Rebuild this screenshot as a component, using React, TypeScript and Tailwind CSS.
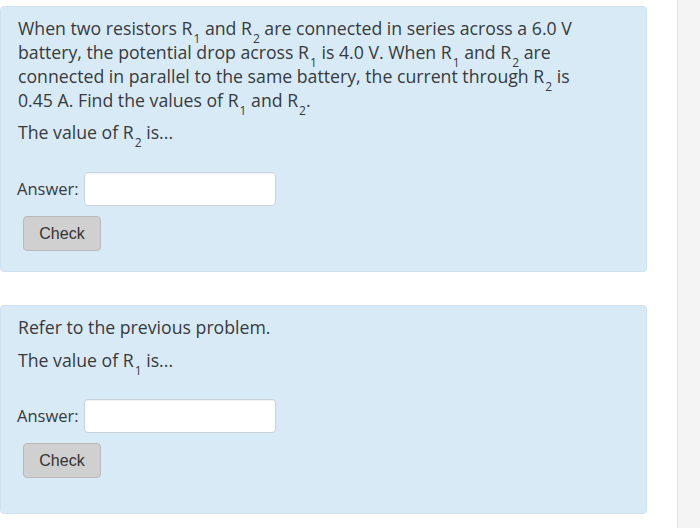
import React from "react";

const font = { fontFamily: '"Open Sans", "Noto Sans", sans-serif' };

function Sub({ n }: { n: string }) {
  return <span className="relative top-[8px] text-[12px] leading-none ml-[1px]">{n}</span>;
}

function AnswerRow() {
  return (
    <div className="flex items-center text-[16.5px]">
      <span className="ml-[-1px] mr-[5px]">Answer:</span>
      <input
        className="w-[192px] h-[34px] bg-white border border-[#c9d3dc] rounded-[4px] shadow-[inset_0_1px_1px_rgba(0,0,0,0.06)] outline-none"
        type="text"
      />
    </div>
  );
}

function CheckButton() {
  return (
    <button
      className="ml-[5px] w-[78px] h-[35px] bg-[#d0d0d0] border border-[#b9b9b9] rounded-[4px] text-[16px] text-[#333]"
      style={{ fontFamily: '"Liberation Sans", Arial, sans-serif' }}
    >
      Check
    </button>
  );
}

export default function App() {
  return (
    <div className="flex w-[700px] h-[528px] bg-white overflow-hidden text-[#363a3d]" style={font}>
      <div className="w-[677px] pt-[6px] pr-[30px]">
        {/* question 1 */}
        <div className="bg-[#d9eaf7] border border-[#cfe2f1] rounded-[4px] pl-[17px] pt-[9px] pb-[20px] text-[17.7px] leading-[24px]">
          <p className="w-[575px]">
            When two resistors R<Sub n="1" /> and R<Sub n="2" /> are connected in series across a 6.0 V battery,
            the potential drop across R<Sub n="1" /> is 4.0 V. When R<Sub n="1" /> and R<Sub n="2" /> are
            connected in parallel to the same battery, the current through R<Sub n="2" /> is 0.45 A. Find the
            values of R<Sub n="1" /> and R<Sub n="2" />.
          </p>
          <p className="mt-[8px]">
            The value of R<Sub n="2" /> is...
          </p>
          <div className="mt-[28px]">
            <AnswerRow />
          </div>
          <div className="mt-[10px]">
            <CheckButton />
          </div>
        </div>

        {/* question 2 */}
        <div className="mt-[33px] bg-[#d9eaf7] border border-[#cfe2f1] rounded-[4px] pl-[17px] pt-[9px] pb-[35px] text-[17.7px] leading-[24px]">
          <p>Refer to the previous problem.</p>
          <p className="mt-[9px]">
            The value of R<Sub n="1" /> is...
          </p>
          <div className="mt-[27px]">
            <AnswerRow />
          </div>
          <div className="mt-[10px]">
            <CheckButton />
          </div>
        </div>
      </div>
      <div className="flex-1 bg-[#f4f4f4] border-l border-[#e3e3e3]" />
    </div>
  );
}
